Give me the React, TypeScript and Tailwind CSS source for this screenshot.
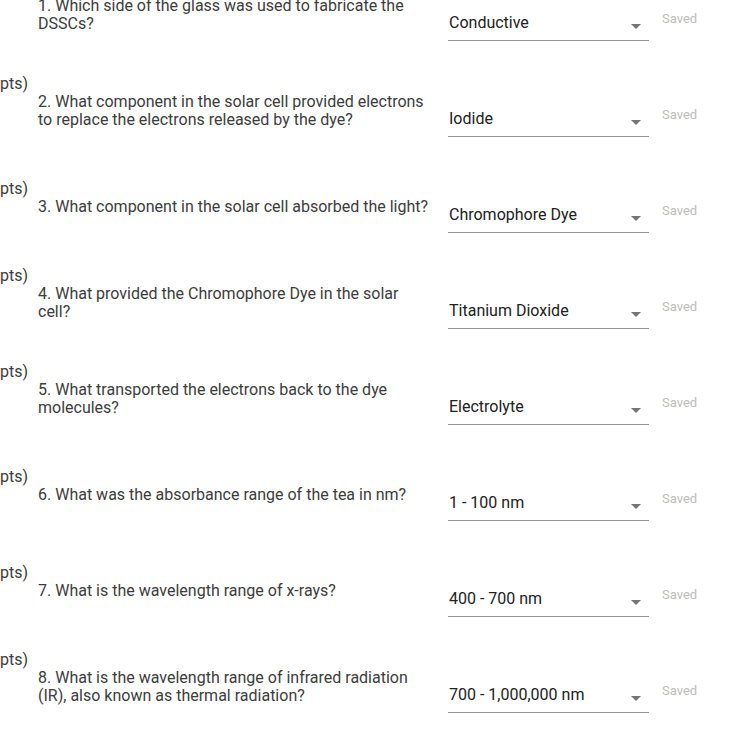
import React from "react";

const questions = [
  { n: 1, pts: 1, text: "Which side of the glass was used to fabricate the DSSCs?", answer: "Conductive" },
  { n: 2, pts: 1, text: "What component in the solar cell provided electrons to replace the electrons released by the dye?", answer: "Iodide" },
  { n: 3, pts: 1, text: "What component in the solar cell absorbed the light?", answer: "Chromophore Dye" },
  { n: 4, pts: 1, text: "What provided the Chromophore Dye in the solar cell?", answer: "Titanium Dioxide" },
  { n: 5, pts: 1, text: "What transported the electrons back to the dye molecules?", answer: "Electrolyte" },
  { n: 6, pts: 1, text: "What was the absorbance range of the tea in nm?", answer: "1 - 100 nm" },
  { n: 7, pts: 1, text: "What is the wavelength range of x-rays?", answer: "400 - 700 nm" },
  { n: 8, pts: 1, text: "What is the wavelength range of infrared radiation (IR), also known as thermal radiation?", answer: "700 - 1,000,000 nm" },
];

const Dropdown = ({ value }: { value: string }) => (
  <div className="w-[201px] border-b border-[#949494] pt-[1px] pb-[5px] pl-[1px] pr-[8px] flex items-center justify-between">
    <span className="text-[16px] leading-[24px] text-[#212121]">{value}</span>
    <svg width="10" height="5" viewBox="0 0 10 5" className="mt-[6px]">
      <path d="M0 0 L10 0 L5 5 Z" fill="#757575" />
    </svg>
  </div>
);

export default function App() {
  return (
    <div className="min-h-screen bg-white overflow-hidden" style={{ fontFamily: "Roboto, 'Noto Sans', sans-serif" }}>
      <div className="mt-[-34px]">
        {questions.map((q) => (
          <div key={q.n} className="h-[96px] flex items-center">
            <div className="relative mt-[2px] ml-[38px] w-[392px] text-[16px] leading-[18px] text-[#3c3c3c]">
              <span className="absolute right-full bottom-full mr-[10px] whitespace-nowrap text-[#3c3c3c]">
                ({q.pts} pts)
              </span>
              {q.n}. {q.text}
            </div>
            <div className="self-start mt-[44px] ml-[18px] flex items-start">
              <Dropdown value={q.answer} />
              <span className="ml-[13px] mt-[1px] text-[13px] leading-[16px] text-[#bdbdbd]">Saved</span>
            </div>
          </div>
        ))}
      </div>
    </div>
  );
}
